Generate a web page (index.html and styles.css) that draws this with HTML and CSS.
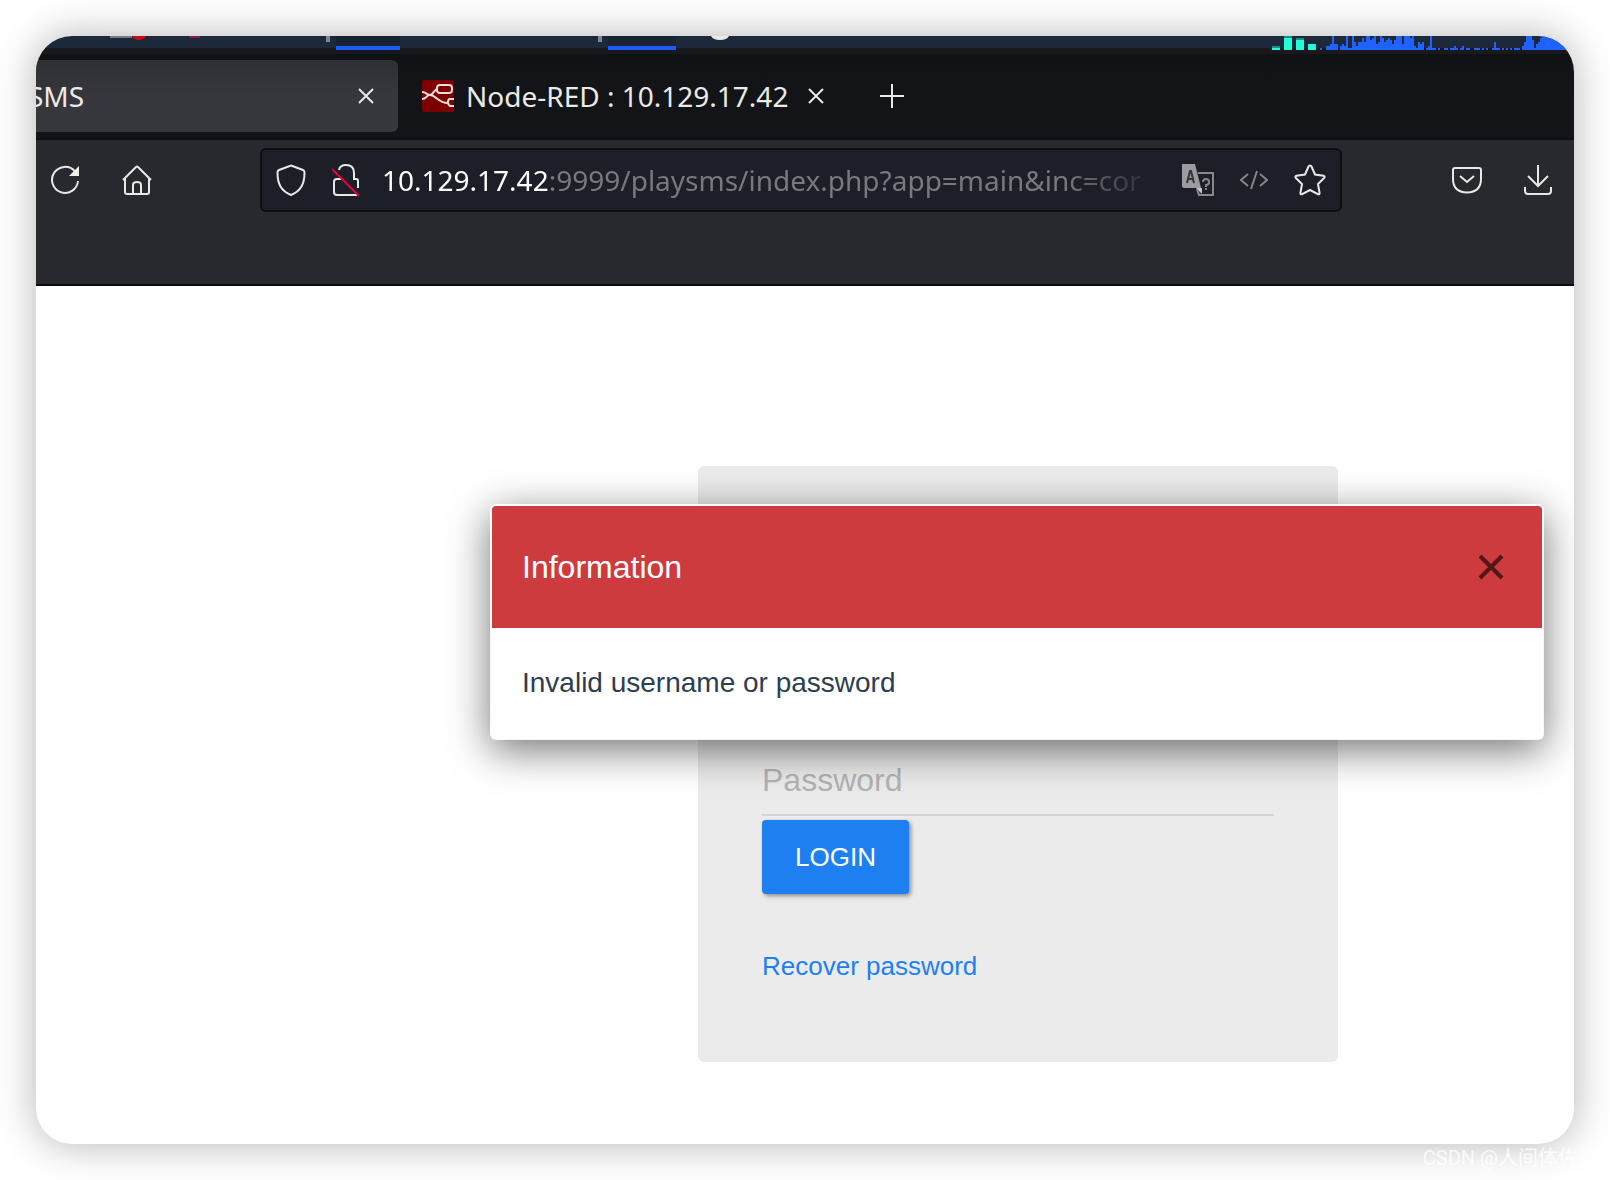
FILE: index.html
```html
<!DOCTYPE html>
<html lang="en">
<head>
  <meta charset="UTF-8">
  <title>playSMS</title>
  <link rel="stylesheet" href="styles.css">
</head>
<body>

  <div class="window">

    <!-- Desktop panel -->
    <div class="panel">
      <svg class="panel-apps" width="700" height="14" viewBox="0 0 700 14">
        <rect x="74" y="0" width="22" height="2" fill="#737b85"/>
        <path d="M96 0h14q-2 4-7 4t-7-4z" fill="#cc0a14"/>
        <rect x="153" y="0" width="11" height="2" fill="#8b1a48"/>
        <rect x="290" y="0" width="4" height="6" fill="#7d8792"/>
        <rect x="300" y="0" width="64" height="10" fill="#192230"/>
        <rect x="300" y="10" width="64" height="4" fill="#1d5bfa"/>
        <rect x="562" y="0" width="4" height="6" fill="#7d8792"/>
        <rect x="572" y="0" width="68" height="10" fill="#182430"/>
        <rect x="572" y="10" width="68" height="4" fill="#1d5bfa"/>
        <path d="M675 0h18q-2 4-9 4t-9-4z" fill="#eceae6"/>
      </svg>
      <div class="panel-meters">
        <svg width="44" height="14" viewBox="0 0 44 14">
          <path d="M0 10h8v2H0zM12 0h8v2h-8zM24 2h8v2h-8z" fill="#168f88"/>
          <path d="M0 12h8v2H0zM12 2h8v12h-8zM24 4h8v10h-8zM36 8h8v6h-8z" fill="#21fdd9"/>
        </svg>
        <svg id="netGraph" width="254" height="14" viewBox="0 0 127 7" shape-rendering="crispEdges"></svg>
      </div>
    </div>

    <!-- Tabs -->
    <div class="tab-bar">
      <div class="tab tab-active">
        <span class="tab-title">SMS</span>
        <button class="icon-btn" aria-label="Close tab">
          <svg width="16" height="16" viewBox="0 0 16 16"><path d="M1 1l14 14M15 1L1 15"/></svg>
        </button>
      </div>
      <div class="tab">
        <svg class="favicon" width="32" height="32" viewBox="0 0 32 32">
          <rect width="32" height="32" rx="2" fill="#7c0000"/>
          <g fill="none" stroke="#f0dcdc" stroke-width="2">
            <rect x="15" y="5" width="15" height="8" rx="3"/>
            <path d="M32 19h-4q-2 0-2 3t2 4h4"/>
            <path d="M0 12c5 0 4 3 8 3 4-1 4-6 8-6M0 19c5 0 4-4 8-4 6 0 8 8 18 8"/>
          </g>
        </svg>
        <span class="tab-title">Node-RED : 10.129.17.42</span>
        <button class="icon-btn" aria-label="Close tab">
          <svg width="16" height="16" viewBox="0 0 16 16"><path d="M1 1l14 14M15 1L1 15"/></svg>
        </button>
      </div>
      <button class="icon-btn new-tab" aria-label="New tab">
        <svg width="24" height="24" viewBox="0 0 24 24"><path d="M12 0v24M0 12h24"/></svg>
      </button>
    </div>

    <!-- Toolbar -->
    <div class="toolbar">
      <div class="nav-buttons">
        <button class="icon-btn" aria-label="Reload">
          <svg width="30" height="30" viewBox="0 0 30 30">
            <path d="M25 6.500A13 13 0 1 0 28 16"/>
            <path d="M29 1v10H19z" fill="#f0f0ec" stroke="none"/>
          </svg>
        </button>
        <button class="icon-btn" aria-label="Home">
          <svg width="30" height="30" viewBox="0 0 30 30">
            <path d="M1 15L14 2q1-1 2 0l13 13M3 13v14q0 2 2 2h20q2 0 2-2V13M11 29v-9q0-3 4-3t4 3v9"/>
          </svg>
        </button>
      </div>

      <div class="url-bar">
        <svg width="30" height="32" viewBox="0 0 30 32">
          <path d="M15 1.500L27 6q1.500.600 1.500 2.500C28.500 20 25 27 15 31 5 27 1.500 20 1.500 8.500 1.500 6.600 3 6 3 6z"/>
        </svg>
        <svg class="lock" width="28" height="32" viewBox="0 0 28 32">
          <path d="M7 6q1-5 7-5 8 0 8 8v6h2q2 0 2 2v7M9 15H5q-3 0-3 3v10q0 3 3 3h20"/>
          <path d="M0 5l27 27" stroke="#e6003c"/>
        </svg>
        <div class="url-text"><span class="url-host">10.129.17.42</span>:9999/playsms/index.php?app=main&amp;inc=cor</div>
        <svg width="32" height="32" viewBox="0 0 32 32">
          <path d="M0 0h13l6 24H2q-2 0-2-2z" fill="#9c9ca0" stroke="none"/>
          <path d="M14 24h6v6z" fill="#c6c6c8" stroke="none"/>
          <path d="M5 19L8 7h1L12 19M6 15h6" stroke="#33343a"/>
          <path d="M16 9h15v22H17l-2-6" stroke="#88898c"/>
          <path d="M21 18q0-3 3-3t3 3-3 3v2M24 24v2" stroke="#88898c"/>
        </svg>
        <svg width="28" height="20" viewBox="0 0 28 20">
          <path d="M8 4L1 10l7 6M20 4l7 6-7 6M17 1l-6 18" stroke="#85858a"/>
        </svg>
        <button class="icon-btn" aria-label="Bookmark this page">
          <svg width="32" height="32" viewBox="0 0 32 32">
            <path d="M16 1.500q1 0 1.500 1L21 10.500l8.500 1.200q2 .8.600 2.300L24 20l1.600 9q0 1.800-1.800 1.200L16 26l-7.800 4.200Q6.400 30.800 6.400 29L8 20l-6.100-6Q.500 12.500 2.500 11.700L11 10.500l3.500-8q.500-1 1.500-1z"/>
          </svg>
        </button>
      </div>

      <div class="action-buttons">
        <button class="icon-btn" aria-label="Save to Pocket">
          <svg width="30" height="28" viewBox="0 0 30 28">
            <path d="M3 2h24q2 0 2 2v9q0 13-14 13.500Q1 26 1 13V4q0-2 2-2z"/>
            <path d="M8 10l7 6 7-6"/>
          </svg>
        </button>
        <button class="icon-btn" aria-label="Downloads">
          <svg width="28" height="30" viewBox="0 0 28 30">
            <path d="M14 0v20M4 11l10 10 10-10M1 22v4q0 3 3 3h20q3 0 3-3v-4"/>
          </svg>
        </button>
      </div>
    </div>

    <!-- Page -->
    <main class="page">
      <div class="login-card">
        <form class="login-form">
          <input type="password" id="password" placeholder="Password" aria-label="Password">
          <button type="button" class="login-btn">LOGIN</button>
        </form>
        <a class="recover-link" href="#">Recover password</a>

        <div class="modal" role="dialog" aria-labelledby="modalTitle">
          <div class="modal-header">
            <span id="modalTitle">Information</span>
            <button class="modal-close" aria-label="Close">
              <svg width="26" height="26" viewBox="0 0 26 26"><path d="M2 2l22 22M24 2L2 24"/></svg>
            </button>
          </div>
          <div class="modal-body">Invalid username or password</div>
        </div>
      </div>
    </main>

  </div>

  <div class="watermark">CSDN @人间体佐菲</div>

  <script src="script.js"></script>
</body>
</html>
```
FILE: styles.css
```css
* {
  box-sizing: border-box;
}
body {
  margin: 0;
  padding: 36px;
  background: white;
  font-family: "Liberation Sans", Arial, sans-serif;
}
button {
  font-family: inherit;
  cursor: pointer;
}
svg {
  display: block;
  flex-shrink: 0;
}
.window {
  display: flex;
  flex-direction: column;
  min-height: calc(100vh - 72px);
  border-radius: 36px;
  overflow: hidden;
  background: white;
  box-shadow: 0 0 40px rgba(0, 0, 0, 0.3);
}

/* Desktop panel */
.panel {
  display: flex;
  justify-content: space-between;
  height: 14px;
  background: linear-gradient(#1d293a 12px, #16181b 12px);
}
.panel-meters {
  display: flex;
  gap: 4px;
}

/* Browser chrome */
.tab-bar,
.toolbar {
  font-family: "Noto Sans", sans-serif;
  font-size: 28px;
  line-height: 36px;
}
.tab-bar {
  display: flex;
  align-items: center;
  height: 90px;
  padding-top: 4px;
  background: linear-gradient(#18191b 4px, #101114 4px, #131418 30px);
  border-bottom: 2px solid #0e0f12;
  color: #eceae6;
}
.tab {
  display: flex;
  align-items: center;
  gap: 12px;
  height: 72px;
  padding: 0 24px;
}
.tab-title {
  white-space: nowrap;
}
.tab .icon-btn {
  margin-left: 8px;
}
.tab-active {
  justify-content: space-between;
  width: 378px;
  margin-left: -16px;
  padding-left: 8px;
  border-radius: 6px;
  background: linear-gradient(#2f3035, #36373c 36px);
}
.icon-btn {
  padding: 0;
  border: none;
  background: none;
}
.icon-btn svg,
.url-bar svg {
  fill: none;
  stroke: #e8e8e6;
  stroke-width: 2;
}
.new-tab {
  margin-left: 32px;
}
.toolbar {
  display: flex;
  align-items: flex-start;
  height: 146px;
  padding: 8px 22px 0 14px;
  background: #28292e;
  border-bottom: 2px solid #0c0c10;
}
.nav-buttons,
.action-buttons {
  display: flex;
  align-items: center;
  gap: 42px;
  height: 64px;
}
.url-bar {
  display: flex;
  flex: 1;
  align-items: center;
  gap: 26px;
  height: 64px;
  min-width: 0;
  margin: 0 110px 0 108px;
  padding: 0 14px;
  border: 2px solid #0d0e12;
  border-radius: 6px;
  background: #1c1f27;
}
.url-text {
  flex: 1;
  min-width: 0;
  margin: 0 -8px 0 -4px;
  overflow: hidden;
  white-space: nowrap;
  color: #77797e;
  mask-image: linear-gradient(to right, black calc(100% - 100px), transparent);
}
.url-host {
  color: #fbfbfb;
}

/* Login page */
.page {
  display: flex;
  flex: 1;
  justify-content: center;
  align-items: flex-start;
  padding: 180px 0 80px 426px;
}
.login-card {
  position: relative;
  width: 640px;
  padding: 280px 64px 76px;
  border-radius: 6px;
  background: #ebebeb;
}
.login-form {
  display: flex;
  flex-direction: column;
  align-items: flex-start;
  gap: 4px;
}
.login-form input {
  width: 100%;
  height: 70px;
  padding: 0;
  border: none;
  border-bottom: 2px solid #d4d4d4;
  background: none;
  font-family: inherit;
  font-size: 32px;
}
.login-form input::placeholder {
  color: #b3b3b3;
}
.login-btn {
  height: 74px;
  padding: 0 33px;
  border: none;
  border-radius: 4px;
  background: #1e80f0;
  box-shadow: 2px 2px 4px rgba(0, 0, 0, 0.4);
  color: white;
  font-size: 26px;
}
.recover-link {
  display: inline-block;
  margin-top: 52px;
  color: #1e80f0;
  font-size: 26px;
  line-height: 40px;
  text-decoration: none;
}

/* Message box over the card */
.modal {
  position: absolute;
  top: 38px;
  left: -208px;
  right: -206px;
  border: 2px solid rgba(255, 255, 255, 0.9);
  border-radius: 6px;
  background: white;
  background-clip: padding-box;
  box-shadow: 0 10px 40px rgba(0, 0, 0, 0.55);
}
.modal-header {
  display: flex;
  justify-content: space-between;
  align-items: center;
  height: 122px;
  padding: 0 38px 0 30px;
  border-radius: 4px 4px 0 0;
  background: #cd3b3f;
  color: white;
  font-size: 32px;
}
.modal-close {
  padding: 0;
  border: none;
  background: none;
}
.modal-close svg {
  stroke: #521719;
  stroke-width: 4;
}
.modal-body {
  padding: 36px 30px;
  color: #2c3e50;
  font-size: 28px;
  line-height: 38px;
}

.watermark {
  position: absolute;
  right: 12px;
  bottom: 8px;
  color: rgba(255, 255, 255, 0.8);
  font-family: Roboto, "Noto Sans CJK SC", sans-serif;
  font-size: 20px;
  line-height: 28px;
  white-space: nowrap;
}
```
FILE: script.js
```javascript
// Network activity, one digit per column (0-7)
const samples = "1002237330232711742446477567347645653577737776721434" +
  "012711010011011210120110011101010014110101010111024777" +
  "513467767777777777777";

function drawGraph() {
  const graph = document.getElementById("netGraph");
  let bars = "";

  for (let i = 0; i < samples.length; i++) {
    let h = Number(samples[i]);
    bars += `<rect x="${i}" y="${7 - h}" width="1" height="${h}" fill="#1f62ff"/>`;
  }

  graph.innerHTML = bars;
}

drawGraph();
```
